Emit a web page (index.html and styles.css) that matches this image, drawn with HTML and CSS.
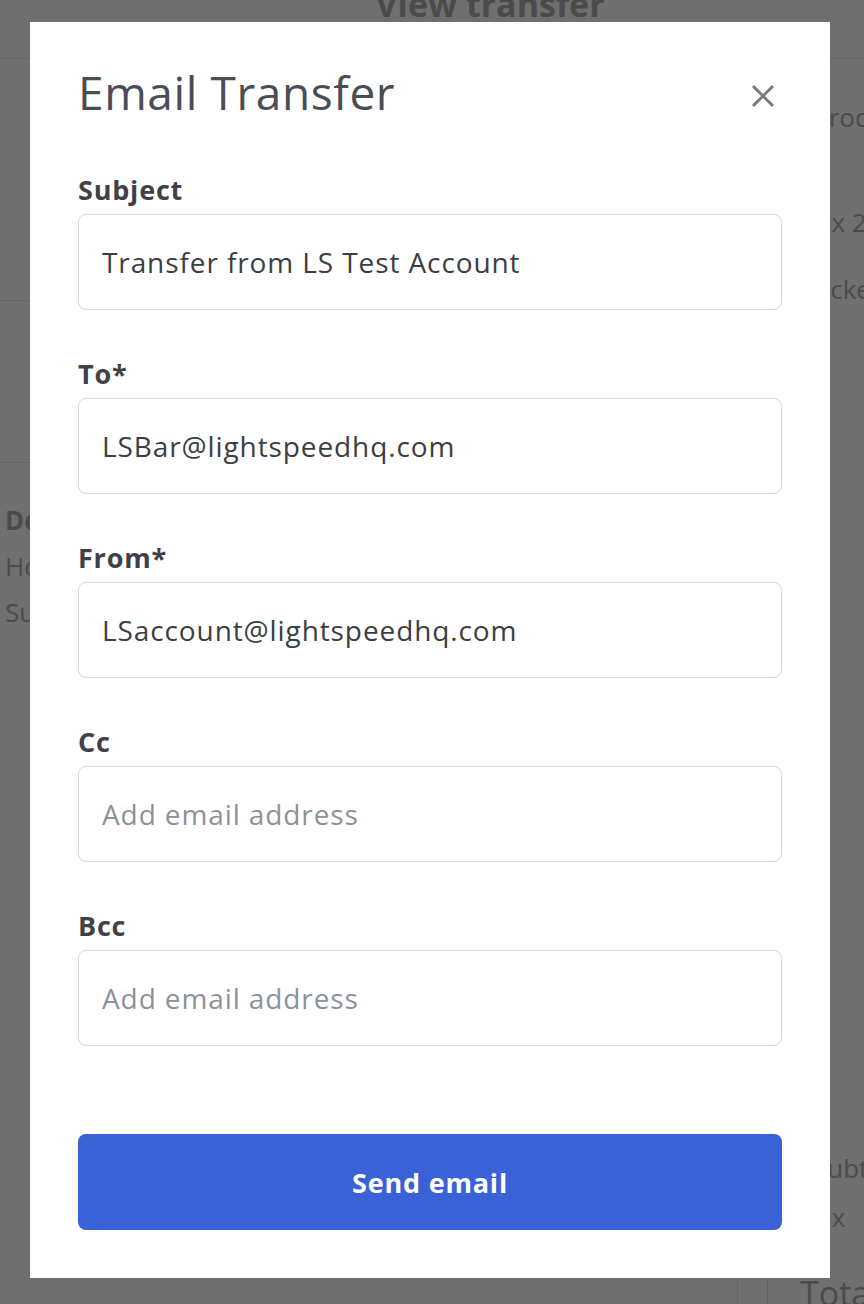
FILE: index.html
```html
<!DOCTYPE html>
<html>
  <head>
    <title>Email Transfer</title>
    <link rel="stylesheet" href="styles.css">
  </head>
  <body>
    <div class="page">
      <header class="page-header">
        <h1 class="page-title">View transfer</h1>
      </header>
      <div class="page-body">
        <div class="left-col">
          <div class="left-block"></div>
          <div class="left-block left-block-short"></div>
          <div class="details">
            <div class="details-head">Details</div>
            <div>Home location</div>
            <div>Supplier</div>
          </div>
        </div>
        <div class="right-col">
          <div class="summary">
            <div class="line-item first">Products</div>
            <div class="line-item gap-lg">Box 20</div>
            <div class="line-item gap-sm">Picked</div>
            <div class="line-item totals">Subtotal</div>
            <div class="line-item gap-xs">Tax</div>
            <div class="line-item total">Total</div>
          </div>
        </div>
      </div>
    </div>

    <div class="overlay">
      <div class="modal">
        <div class="modal-header">
          <h2 class="modal-title">Email Transfer</h2>
          <button class="close-btn" type="button" aria-label="Close">
            <svg width="24" height="24" viewBox="0 0 24 24">
              <path d="M2 2 L22 22 M22 2 L2 22" stroke="#777a7f" stroke-width="3" fill="none" />
            </svg>
          </button>
        </div>
        <form class="email-form">
          <div class="field">
            <label for="subject">Subject</label>
            <input type="text" id="subject" value="Transfer from LS Test Account" />
          </div>
          <div class="field">
            <label for="to">To*</label>
            <input type="text" id="to" value="LSBar@lightspeedhq.com" />
          </div>
          <div class="field">
            <label for="from">From*</label>
            <input type="text" id="from" value="LSaccount@lightspeedhq.com" />
          </div>
          <div class="field">
            <label for="cc">Cc</label>
            <input type="text" id="cc" placeholder="Add email address" />
          </div>
          <div class="field">
            <label for="bcc">Bcc</label>
            <input type="text" id="bcc" placeholder="Add email address" />
          </div>
          <button class="send-btn" type="submit">Send email</button>
        </form>
      </div>
    </div>
  </body>
</html>
```

FILE: styles.css
```css
body {
  margin: 0;
  font-family: "Open Sans", sans-serif;
  background-color: #6f6f6f;
  color: #4b4b4b;
  overflow: hidden;
}

/* page behind the dialog */
.page-header {
  display: flow-root;
  height: 58px;
  border-bottom: 1px solid #646464;
  padding-left: 116px;
  text-align: center;
}
.page-title {
  margin: -16px 0 0;
  font-size: 34px;
  line-height: 40px;
  font-weight: 700;
}
.page-body {
  display: grid;
  grid-template-columns: 737px 1fr;
  height: 1245px;
}
.left-block {
  height: 241px;
  border-bottom: 1px solid #646464;
}
.left-block-short {
  height: 161px;
}
.details {
  width: 25px;
  padding: 34px 0 0 5px;
  overflow: hidden;
  white-space: nowrap;
  font-size: 26px;
  line-height: 46px;
}
.details-head {
  font-weight: 700;
}
.right-col {
  border-left: 1px solid #646464;
  padding-left: 29px;
  display: flex;
}
.summary {
  flex: 1;
  border-left: 1px solid #646464;
  padding-left: 45px;
  white-space: nowrap;
}
.line-item {
  font-size: 26px;
  line-height: 36px;
}
.first {
  margin-top: 40px;
}
.gap-lg {
  margin-top: 69px;
  margin-left: -14px;
}
.gap-sm {
  margin-top: 31px;
  margin-left: -5px;
}
.totals {
  margin-top: 843px;
}
.gap-xs {
  margin-top: 13px;
  margin-left: -10px;
}
.total {
  margin-top: 38px;
  margin-left: -13px;
  font-size: 34px;
  line-height: 40px;
}

/* dialog */
.overlay {
  position: fixed;
  inset: 0;
  padding: 22px 0 0 30px;
}
.modal {
  width: 800px;
  height: 1256px;
  box-sizing: border-box;
  background-color: #fff;
  padding: 42px 48px 48px;
}
.modal-header {
  display: flex;
  justify-content: space-between;
  align-items: flex-start;
}
.modal-title {
  margin: 0;
  font-size: 46px;
  line-height: 56px;
  font-weight: 400;
  letter-spacing: 0.6px;
  color: #4a4d55;
}
.close-btn {
  border: none;
  background: none;
  padding: 0;
  width: 24px;
  height: 24px;
  margin: 20px 7px 0 0;
  cursor: pointer;
}
.close-btn svg {
  display: block;
}
.email-form {
  display: flex;
  flex-direction: column;
  gap: 48px;
  margin-top: 54px;
}
.field label {
  display: block;
  margin-bottom: 8px;
  font-size: 27px;
  line-height: 32px;
  font-weight: 700;
  letter-spacing: 0.8px;
  color: #3f4147;
}
.field input {
  display: block;
  width: 100%;
  height: 96px;
  box-sizing: border-box;
  padding: 0 23px;
  border: 1.5px solid #d5d9de;
  border-radius: 8px;
  font-family: "Open Sans", sans-serif;
  font-size: 28px;
  letter-spacing: 0.9px;
  color: #3b3e44;
  outline: none;
}
.field input::placeholder {
  color: #8c929a;
}
.send-btn {
  margin-top: 40px;
  height: 96px;
  border: none;
  border-radius: 8px;
  background-color: #3a61d6;
  color: white;
  font-family: "Open Sans", sans-serif;
  font-size: 27px;
  font-weight: 700;
  letter-spacing: 0.8px;
  cursor: pointer;
}
```
